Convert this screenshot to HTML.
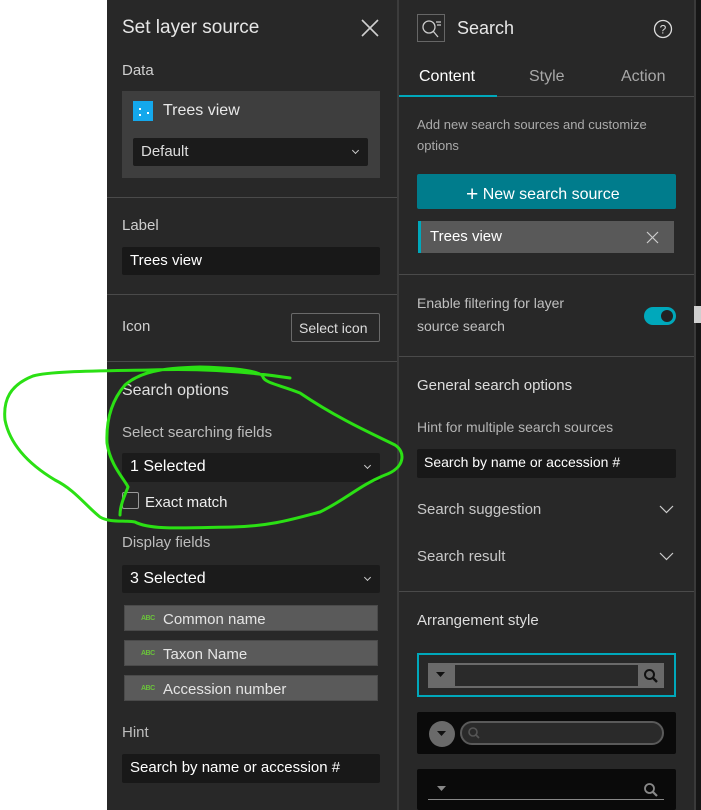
<!DOCTYPE html>
<html><head><meta charset="utf-8"><style>
*{margin:0;padding:0;box-sizing:border-box}
body{width:701px;height:810px;background:#fff;position:relative;overflow:hidden;font-family:"Liberation Sans",sans-serif;color:#e8e8e8}
.a{position:absolute}
.t{position:absolute;white-space:nowrap;line-height:1}
.hr{position:absolute;height:1px;background:#4a4a4a}
.dd{position:absolute;background:#1b1b1b;border-radius:2px}
.chev{position:absolute;width:6px;height:6px;border-right:1.3px solid #ccc;border-bottom:1.3px solid #ccc;transform:rotate(45deg)}
.fld{position:absolute;left:124px;width:254px;height:26px;background:#5a5a5a;border:1px solid #4a4a4a}
.abc{position:absolute;left:16px;top:9px;font-size:7px;color:#6ac23a;font-weight:bold;letter-spacing:-0.5px}
.fld span.n{position:absolute;left:38px;top:5px;font-size:15px;color:#e4e4e4}
</style></head><body>
<!-- left panel -->
<div class="a" style="left:107px;top:0;width:291px;height:810px;background:#282828"></div>
<div class="a" style="left:397px;top:0;width:2px;height:810px;background:#3c3c3c"></div>
<div class="t" style="left:122px;top:18px;font-size:19px;color:#e6e6e6">Set layer source</div>
<svg class="a" style="left:361px;top:19px" width="18" height="18"><path d="M1 1L17 17M17 1L1 17" stroke="#cfcfcf" stroke-width="1.6"/></svg>
<div class="t" style="left:122px;top:63px;font-size:15px;color:#cfcfcf">Data</div>
<div class="a" style="left:122px;top:91px;width:258px;height:87px;background:#3e3e3e"></div>
<div class="a" style="left:133px;top:101px;width:20px;height:20px;background:#14a8ec"></div>
<div class="a" style="left:139px;top:108px;width:2px;height:2px;background:#fff"></div>
<div class="a" style="left:139px;top:114px;width:2px;height:2px;background:#fff"></div>
<div class="a" style="left:147px;top:112px;width:2px;height:2px;background:#fff"></div>
<div class="t" style="left:163px;top:103px;font-size:16px">Trees view</div>
<div class="dd" style="left:133px;top:138px;width:235px;height:28px"></div>
<div class="t" style="left:141px;top:144px;font-size:15px;color:#ddd">Default</div>
<div class="chev" style="left:353px;top:148px;width:5px;height:5px"></div>
<div class="hr" style="left:107px;top:197px;width:290px"></div>
<div class="t" style="left:122px;top:218px;font-size:15px;color:#cfcfcf">Label</div>
<div class="dd" style="left:122px;top:247px;width:258px;height:28px;background:#181818"></div>
<div class="t" style="left:130px;top:253px;font-size:15px;color:#fff">Trees view</div>
<div class="hr" style="left:107px;top:294px;width:290px"></div>
<div class="t" style="left:122px;top:319px;font-size:15px;color:#cfcfcf">Icon</div>
<div class="a" style="left:291px;top:313px;width:89px;height:29px;border:1px solid #6a6a6a;border-radius:2px"></div>
<div class="t" style="left:299px;top:321px;font-size:14px;color:#ddd">Select icon</div>
<div class="hr" style="left:107px;top:361px;width:290px"></div>
<div class="t" style="left:122px;top:383px;font-size:16px;color:#e0e0e0">Search options</div>
<div class="t" style="left:122px;top:425px;font-size:15px;color:#bdbdbd">Select searching fields</div>
<div class="dd" style="left:122px;top:453px;width:258px;height:29px"></div>
<div class="t" style="left:130px;top:459px;font-size:16px;color:#fff">1 Selected</div>
<div class="chev" style="left:365px;top:463px;width:5px;height:5px"></div>
<div class="a" style="left:122px;top:492px;width:17px;height:17px;border:1.5px solid #999;border-radius:2px"></div>
<div class="t" style="left:145px;top:495px;font-size:15px;color:#eee">Exact match</div>
<div class="t" style="left:122px;top:535px;font-size:15px;color:#bdbdbd">Display fields</div>
<div class="dd" style="left:122px;top:565px;width:258px;height:28px"></div>
<div class="t" style="left:130px;top:571px;font-size:16px;color:#fff">3 Selected</div>
<div class="chev" style="left:365px;top:575px;width:5px;height:5px"></div>
<div class="fld" style="top:605px"><span class="abc">ABC</span><span class="n">Common name</span></div>
<div class="fld" style="top:640px"><span class="abc">ABC</span><span class="n">Taxon Name</span></div>
<div class="fld" style="top:675px"><span class="abc">ABC</span><span class="n">Accession number</span></div>
<div class="t" style="left:122px;top:725px;font-size:15px;color:#bdbdbd">Hint</div>
<div class="dd" style="left:122px;top:754px;width:258px;height:29px;background:#181818"></div>
<div class="t" style="left:130px;top:760px;font-size:15px;color:#fff">Search by name or accession #</div>

<!-- right panel -->
<div class="a" style="left:399px;top:0;width:295px;height:810px;background:#282828"></div>
<div class="a" style="left:694px;top:0;width:2px;height:810px;background:#3a3a3a"></div>
<div class="a" style="left:696px;top:0;width:5px;height:810px;background:#161616"></div>
<div class="a" style="left:694px;top:306px;width:7px;height:17px;background:#cfcfcf"></div>
<div class="a" style="left:417px;top:14px;width:28px;height:28px;border:1px solid #666"></div>
<svg class="a" style="left:417px;top:14px" width="28" height="28"><circle cx="12" cy="13" r="6" fill="none" stroke="#ccc" stroke-width="1.3"/><path d="M16 17L21 23M19 8H24M20 11H24" stroke="#ccc" stroke-width="1.3"/></svg>
<div class="t" style="left:457px;top:19px;font-size:18px;color:#e6e6e6">Search</div>
<svg class="a" style="left:653px;top:19px" width="20" height="20"><circle cx="10" cy="10" r="8.5" fill="none" stroke="#ddd" stroke-width="1.3"/><text x="10" y="14.5" font-size="12" text-anchor="middle" fill="#ddd" font-family="Liberation Sans">?</text></svg>
<div class="t" style="left:419px;top:69px;font-size:16px;color:#fff">Content</div>
<div class="t" style="left:529px;top:69px;font-size:16px;color:#a8a8a8">Style</div>
<div class="t" style="left:621px;top:69px;font-size:16px;color:#a8a8a8">Action</div>
<div class="hr" style="left:399px;top:96px;width:295px"></div>
<div class="a" style="left:399px;top:95px;width:98px;height:2px;background:#00a8bb"></div>
<div class="t" style="left:417px;top:118px;font-size:13px;color:#ababab">Add new search sources and customize</div>
<div class="t" style="left:417px;top:139px;font-size:13px;color:#ababab">options</div>
<div class="a" style="left:417px;top:174px;width:259px;height:35px;background:#007c8c;border-radius:2px"></div>
<div class="t" style="left:466px;top:182px;font-size:16px;color:#fff"><span style="font-size:21px;font-weight:300;position:relative;top:2px">+</span> New search source</div>
<div class="a" style="left:418px;top:221px;width:256px;height:32px;background:#595959;border-left:3px solid #00a8bb"></div>
<div class="t" style="left:430px;top:229px;font-size:15px;color:#fff">Trees view</div>
<svg class="a" style="left:646px;top:231px" width="13" height="13"><path d="M1 1L12 12M12 1L1 12" stroke="#ccc" stroke-width="1.2"/></svg>
<div class="hr" style="left:399px;top:274px;width:295px"></div>
<div class="t" style="left:417px;top:296px;font-size:14px;color:#c0c0c0">Enable filtering for layer</div>
<div class="t" style="left:417px;top:319px;font-size:14px;color:#c0c0c0">source search</div>
<div class="a" style="left:644px;top:307px;width:32px;height:18px;border-radius:9px;background:#00a8bb"></div>
<div class="a" style="left:661px;top:310px;width:12px;height:12px;border-radius:6px;background:#222"></div>
<div class="hr" style="left:399px;top:356px;width:295px"></div>
<div class="t" style="left:417px;top:378px;font-size:15px;color:#ddd">General search options</div>
<div class="t" style="left:417px;top:420px;font-size:14px;color:#b5b5b5">Hint for multiple search sources</div>
<div class="dd" style="left:417px;top:449px;width:259px;height:29px;background:#181818"></div>
<div class="t" style="left:424px;top:455px;font-size:14px;color:#fff">Search by name or accession #</div>
<div class="t" style="left:417px;top:502px;font-size:15px;color:#c8c8c8">Search suggestion</div>
<svg class="a" style="left:659px;top:505px" width="15" height="9"><path d="M1 1L7.5 7.5L14 1" fill="none" stroke="#ccc" stroke-width="1.2"/></svg>
<div class="t" style="left:417px;top:549px;font-size:15px;color:#c8c8c8">Search result</div>
<svg class="a" style="left:659px;top:552px" width="15" height="9"><path d="M1 1L7.5 7.5L14 1" fill="none" stroke="#ccc" stroke-width="1.2"/></svg>
<div class="hr" style="left:399px;top:591px;width:295px"></div>
<div class="t" style="left:417px;top:613px;font-size:15px;color:#ddd">Arrangement style</div>
<div class="a" style="left:417px;top:653px;width:259px;height:44px;border:2px solid #00a8bb"></div>
<div class="a" style="left:428px;top:663px;width:236px;height:25px;background:#6a6a6a"></div>
<div class="a" style="left:455px;top:665px;width:183px;height:21px;background:#2a2a2a"></div>
<svg class="a" style="left:436px;top:672px" width="10" height="6"><path d="M0 0H9L4.5 5Z" fill="#111"/></svg>
<svg class="a" style="left:643px;top:668px" width="16" height="16"><circle cx="6.5" cy="6.5" r="4.5" fill="none" stroke="#111" stroke-width="2"/><path d="M10 10L14 14" stroke="#111" stroke-width="2.4"/></svg>
<div class="a" style="left:417px;top:712px;width:259px;height:42px;background:#0a0a0a;border-radius:2px"></div>
<div class="a" style="left:429px;top:721px;width:26px;height:26px;border-radius:13px;background:#6a6a6a"></div>
<svg class="a" style="left:437px;top:731px" width="10" height="6"><path d="M0 0H9L4.5 5Z" fill="#111"/></svg>
<div class="a" style="left:460px;top:721px;width:204px;height:24px;border-radius:12px;border:2px solid #5a5a5a;background:#2a2a2a"></div>
<svg class="a" style="left:467px;top:726px" width="14" height="14"><circle cx="6" cy="6" r="4" fill="none" stroke="#555" stroke-width="1.6"/><path d="M9 9L12 12" stroke="#555" stroke-width="1.8"/></svg>
<div class="a" style="left:417px;top:769px;width:259px;height:41px;background:#0a0a0a;border-radius:2px"></div>
<svg class="a" style="left:437px;top:786px" width="10" height="6"><path d="M0 0H9L4.5 5Z" fill="#888"/></svg>
<svg class="a" style="left:643px;top:782px" width="16" height="16"><circle cx="6.5" cy="6.5" r="4.5" fill="none" stroke="#888" stroke-width="1.8"/><path d="M10 10L14 14" stroke="#888" stroke-width="2.2"/></svg>
<div class="a" style="left:428px;top:799px;width:236px;height:1px;background:#888"></div>

<!-- green annotation -->
<svg class="a" style="left:0;top:0" width="701" height="810">
<path d="M290 378 C 250 372, 200 368, 150 370 C 100 371, 50 371, 33 376 C 10 385, 3 400, 5 420 C 10 445, 30 465, 55 480 C 75 490, 85 505, 100 517 C 110 523, 125 520, 135 522 C 150 530, 180 528, 233 527 C 270 526, 290 520, 320 512 C 345 500, 360 485, 385 475 C 405 468, 406 452, 395 445 C 375 435, 340 420, 300 393 C 280 385, 265 383, 263 377 C 262 372, 240 368, 200 367 C 160 368, 140 372, 125 385 C 112 400, 106 420, 107 443 C 110 465, 125 480, 128 487 C 125 495, 120 505, 120 515" fill="none" stroke="#2be014" stroke-width="3" stroke-linecap="round" stroke-linejoin="round"/>
</svg>
</body></html>
